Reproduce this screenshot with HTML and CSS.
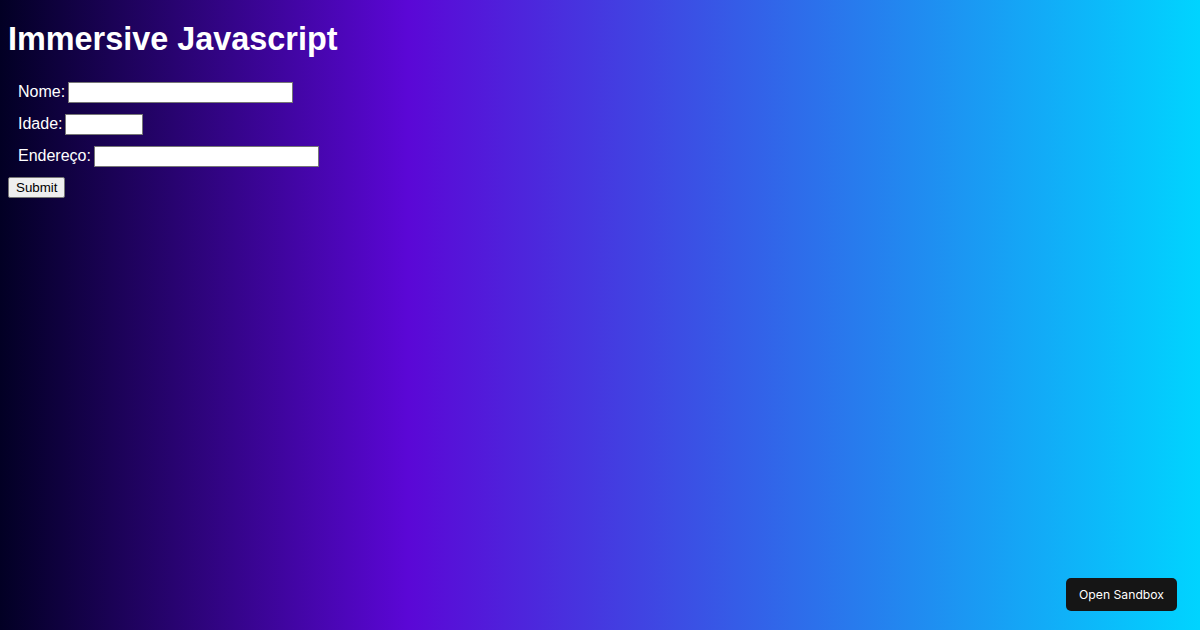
FILE: index.html
```html
<!DOCTYPE html>
<html lang="pt">
<head>
<meta charset="utf-8">
<title>Immersive Javascript</title>
<link rel="stylesheet" href="styles.css">
</head>
<body>
<h1 class="title">Immersive Javascript</h1>
<form class="form">
  <div class="row"><label>Nome:</label><input class="field field-wide" type="text"></div>
  <div class="row"><label>Idade:</label><input class="field field-short" type="text"></div>
  <div class="row"><label>Endereço:</label><input class="field field-wide" type="text"></div>
  <button class="submit" type="button">Submit</button>
</form>
<a class="sandbox">Open Sandbox</a>
</body>
</html>
```
FILE: styles.css
```css
html {
  height: 100%;
  overflow: hidden;
  background: linear-gradient(90deg, #020024 0%, #5b07d6 34%, #00d4ff 100%);
}
body {
  margin: 0 8px 8px;
  font-family: "Liberation Sans", Arial, sans-serif;
  color: #fff;
}
.title {
  font-size: 32.4px;
  font-weight: bold;
  margin: 21.44px 0 24px;
}
.row {
  padding: 0 10px;
  height: 31.7px;
  font-size: 16px;
}
.field {
  font-family: "Liberation Sans", Arial, sans-serif;
  font-size: 13.33px;
  height: 21px;
  box-sizing: border-box;
  border: 1px solid #767676;
  border-radius: 0;
  padding: 1px 2px;
  margin: 0 0 0 3px;
  background: #fff;
  vertical-align: baseline;
}
.field-wide {
  width: 225px;
}
.field-short {
  width: 78px;
}
.submit {
  font-family: "Liberation Sans", Arial, sans-serif;
  font-size: 13.33px;
  color: #000;
  background: #efefef;
  border: 1px solid #767676;
  border-radius: 2px;
  padding: 1px 7px;
  height: 21px;
  margin: -1px 0 0;
}
.sandbox {
  position: fixed;
  right: 23px;
  bottom: 19px;
  width: 111px;
  height: 33px;
  box-sizing: border-box;
  display: flex;
  align-items: center;
  justify-content: center;
  background: #151515;
  color: #fff;
  border-radius: 5px;
  font-family: Inter, "Liberation Sans", sans-serif;
  font-size: 12.2px;
}
```
